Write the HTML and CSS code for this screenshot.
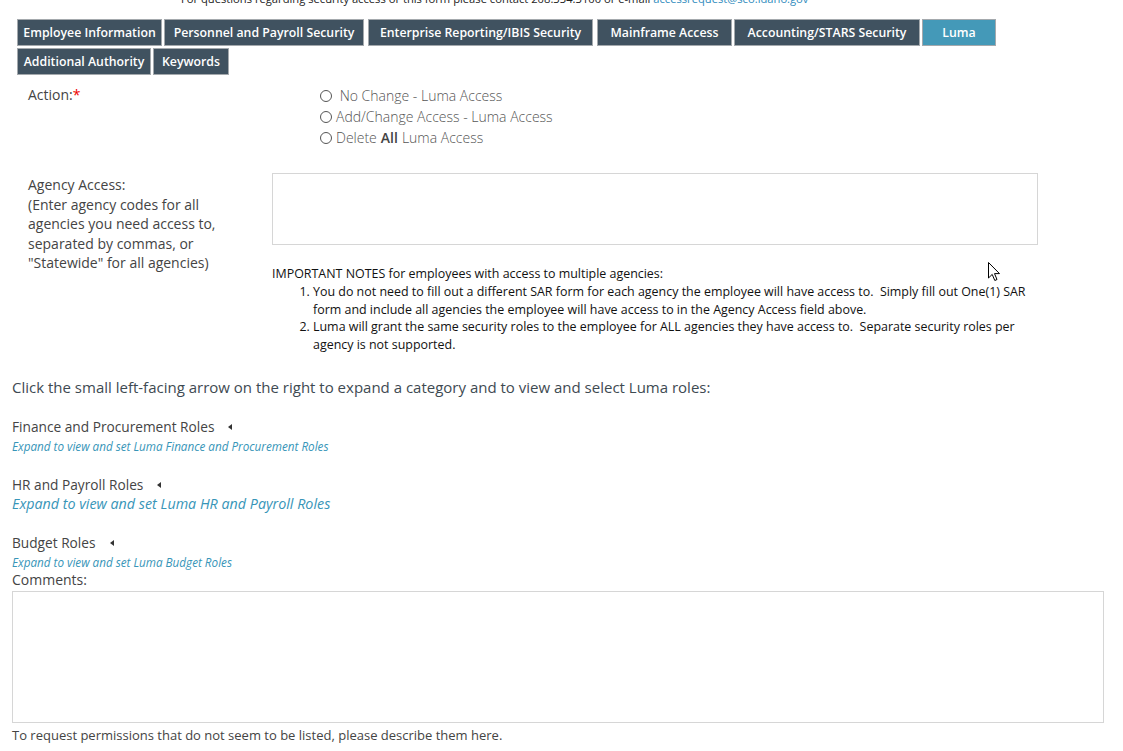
FILE: index.html
```html
<!DOCTYPE html>
<html lang="en">
<head>
    <meta charset="UTF-8">
    <meta name="viewport" content="width=device-width, initial-scale=1.0">
    <title>Security Access Request - Luma</title>
    <link rel="stylesheet" href="styles.css">
</head>
<body>
    <p class="contact">For questions regarding security access or this form please contact 208.334.3100 or e-mail <a href="#">accessrequest@sco.idaho.gov</a></p>

    <nav class="tabs">
        <a class="tab tab-employee" href="#">Employee Information</a>
        <a class="tab tab-payroll" href="#">Personnel and Payroll Security</a>
        <a class="tab tab-ibis" href="#">Enterprise Reporting/IBIS Security</a>
        <a class="tab tab-mainframe" href="#">Mainframe Access</a>
        <a class="tab tab-stars" href="#">Accounting/STARS Security</a>
        <a class="tab tab-luma active" href="#">Luma</a>
        <a class="tab tab-authority" href="#">Additional Authority</a>
        <a class="tab tab-keywords" href="#">Keywords</a>
    </nav>

    <div class="form-grid">
        <div class="field-label">Action:<span class="required">*</span></div>
        <div class="radio-list">
            <label class="radio"><input type="radio" name="action">&nbsp;No Change - Luma Access</label>
            <label class="radio"><input type="radio" name="action">Add/Change Access - Luma Access</label>
            <label class="radio"><input type="radio" name="action">Delete <b>All</b> Luma Access</label>
        </div>

        <div class="field-label agency-label">Agency Access:<br>(Enter agency codes for all agencies you need access to, separated by commas, or "Statewide" for all agencies)</div>
        <div class="agency-field">
            <textarea class="agency-input"></textarea>
            <div class="notes">
                IMPORTANT NOTES for employees with access to multiple agencies:
                <ol>
                    <li>You do not need to fill out a different SAR form for each agency the employee will have access to.&nbsp; Simply fill out One(1) SAR form and include all agencies the employee will have access to in the Agency Access field above.</li>
                    <li>Luma will grant the same security roles to the employee for ALL agencies they have access to.&nbsp; Separate security roles per agency is not supported.</li>
                </ol>
            </div>
        </div>
    </div>

    <p class="roles-intro">Click the small left-facing arrow on the right to expand a category and to view and select Luma roles:</p>

    <div class="roles">
        <div class="role-section">
            <div class="role-title">Finance and Procurement Roles<span class="toggle"></span></div>
            <div class="role-hint">Expand to view and set Luma Finance and Procurement Roles</div>
        </div>
        <div class="role-section">
            <div class="role-title">HR and Payroll Roles<span class="toggle"></span></div>
            <div class="role-hint role-hint-large">Expand to view and set Luma HR and Payroll Roles</div>
        </div>
        <div class="role-section">
            <div class="role-title">Budget Roles<span class="toggle"></span></div>
            <div class="role-hint">Expand to view and set Luma Budget Roles</div>
        </div>
    </div>

    <label class="comments-label" for="comments">Comments:</label>
    <textarea class="comments" id="comments"></textarea>
    <div class="comments-help">To request permissions that do not seem to be listed, please describe them here.</div>

    <svg class="cursor" width="13" height="20" viewBox="0 0 13 20">
        <path d="M0.5 0.5 L0.5 16 L4.2 12.4 L6.8 18.5 L9 17.5 L6.5 11.6 L11.5 11.6 Z" fill="#fff" stroke="#000" stroke-width="1"/>
    </svg>
</body>
</html>
```

FILE: styles.css
```css
body {
    font-family: "Open Sans", "Noto Sans", sans-serif;
    color: #444;
    background-color: #fff;
    margin: 0;
    padding: 0 19px 0 12px;
    position: relative;
}
.contact {
    margin: -9px 0 0 169px;
    font-size: 11.2px;
    line-height: 16px;
    color: #222;
}
.contact a {
    color: #2f8bbd;
    text-decoration: none;
}
.tabs {
    display: flex;
    flex-wrap: wrap;
    gap: 2px;
    margin: 12px 0 0 5px;
}
.tab {
    box-sizing: border-box;
    height: 27px;
    line-height: 25px;
    border: 1px solid #a4a9ad;
    background-color: #405260;
    color: #fff;
    font-size: 12.3px;
    font-weight: 600;
    text-align: center;
    text-decoration: none;
    white-space: nowrap;
}
.tab.active {
    background-color: #4499b8;
}
.tab-employee { width: 145px; }
.tab-payroll { width: 200px; }
.tab-ibis { width: 225px; margin-left: 2px; }
.tab-mainframe { width: 135px; margin-left: 2px; }
.tab-stars { width: 186px; }
.tab-luma { width: 74px; }
.tab-authority { width: 134px; }
.tab-keywords { width: 76px; }

.form-grid {
    display: grid;
    grid-template-columns: 244px 767px;
    row-gap: 25px;
    margin-top: 10px;
    padding-left: 16px;
}
.field-label {
    font-size: 14px;
    line-height: 20px;
    width: 200px;
}
.required {
    color: #e00;
}
.radio-list {
    display: flex;
    flex-direction: column;
    margin-left: 48px;
}
.radio {
    font-size: 14px;
    line-height: 21px;
    font-weight: 300;
    color: #555;
    display: flex;
    align-items: center;
}
.radio b {
    font-weight: 600;
    color: #444;
    margin: 0 4px;
}
.radio input {
    appearance: none;
    width: 12px;
    height: 12px;
    border: 1px solid #555;
    border-radius: 50%;
    margin: 0 4px 0 0;
    box-sizing: border-box;
}
.agency-label {
    padding-top: 2px;
    line-height: 19.5px;
}
.agency-input {
    display: block;
    box-sizing: border-box;
    width: 766px;
    height: 72px;
    border: 1px solid #d6d6d6;
    resize: none;
    margin: 0;
}
.notes {
    margin-top: 20px;
    font-size: 12.45px;
    line-height: 17.8px;
    color: #111;
}
.notes ol {
    margin: 0;
    padding-left: 41px;
}

.roles-intro {
    margin: 23px 0 20px;
    font-size: 15px;
    line-height: 20px;
    color: #3e4a52;
}
.role-section {
    margin-bottom: 20px;
}
.role-section:last-child {
    margin-bottom: 0;
}
.role-title {
    font-size: 13.7px;
    line-height: 20px;
    color: #444;
    display: flex;
    align-items: center;
}
.toggle {
    width: 0;
    height: 0;
    margin-left: 14px;
    border-top: 3.5px solid transparent;
    border-bottom: 3.5px solid transparent;
    border-right: 4px solid #333;
}
.role-hint {
    font-size: 11.7px;
    line-height: 18px;
    font-style: italic;
    color: #3795b8;
}
.role-hint-large {
    font-size: 14.3px;
}
.comments-label {
    display: block;
    font-size: 14px;
    line-height: 18px;
}
.comments {
    display: block;
    box-sizing: border-box;
    width: 100%;
    height: 132px;
    margin: 2px 0 0;
    border: 1px solid #d6d6d6;
    resize: none;
}
.comments-help {
    font-size: 13px;
    line-height: 18px;
    margin-top: 3px;
}
.cursor {
    position: absolute;
    left: 988px;
    top: 262px;
}
```
